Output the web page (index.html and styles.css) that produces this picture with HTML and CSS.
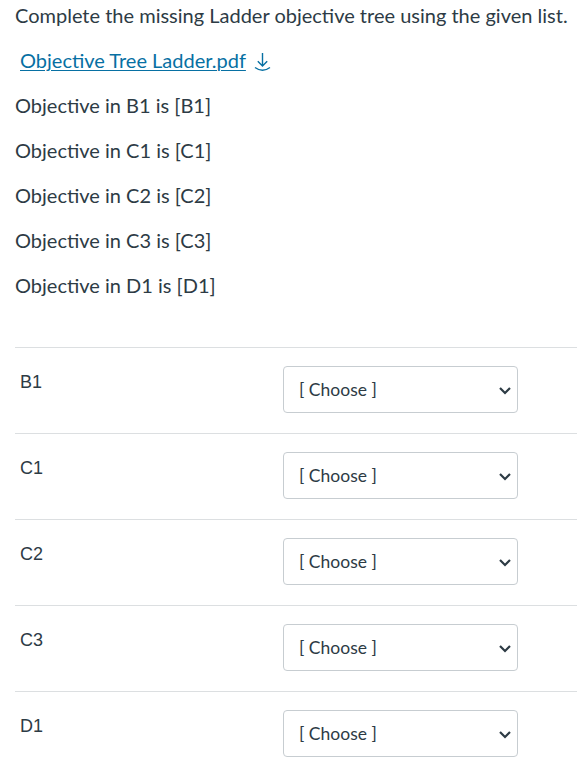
FILE: index.html
```html
<!DOCTYPE html>
<html>
<head>
<meta charset="utf-8">
<link rel="stylesheet" href="styles.css">
</head>
<body>
<div class="page">
  <p class="txt">Complete the missing Ladder objective tree using the given list.</p>
  <p class="txt link-line"><a class="file-link" href="#">Objective Tree Ladder.pdf</a><svg class="dl" width="17" height="21" viewBox="0 0 17 21"><path d="M8.5 2 V15 M3.8 10.3 L8.5 15 L13.2 10.3" fill="none" stroke="#0770a3" stroke-width="1.4"/><path d="M1 16.5 Q8.5 22 16 16.5" fill="none" stroke="#0770a3" stroke-width="1.4"/></svg></p>
  <p class="txt">Objective in B1 is [B1]</p>
  <p class="txt">Objective in C1 is [C1]</p>
  <p class="txt">Objective in C2 is [C2]</p>
  <p class="txt">Objective in C3 is [C3]</p>
  <p class="txt">Objective in D1 is [D1]</p>

  <div class="rows">
    <div class="row"><div class="label">B1</div><div class="sel"><span>[ Choose ]</span><svg class="chev" width="14" height="9" viewBox="0 0 14 9"><path d="M2 2 L7 7 L12 2" fill="none" stroke="#2d3b45" stroke-width="2.2"/></svg></div></div>
    <div class="row"><div class="label">C1</div><div class="sel"><span>[ Choose ]</span><svg class="chev" width="14" height="9" viewBox="0 0 14 9"><path d="M2 2 L7 7 L12 2" fill="none" stroke="#2d3b45" stroke-width="2.2"/></svg></div></div>
    <div class="row"><div class="label">C2</div><div class="sel"><span>[ Choose ]</span><svg class="chev" width="14" height="9" viewBox="0 0 14 9"><path d="M2 2 L7 7 L12 2" fill="none" stroke="#2d3b45" stroke-width="2.2"/></svg></div></div>
    <div class="row"><div class="label">C3</div><div class="sel"><span>[ Choose ]</span><svg class="chev" width="14" height="9" viewBox="0 0 14 9"><path d="M2 2 L7 7 L12 2" fill="none" stroke="#2d3b45" stroke-width="2.2"/></svg></div></div>
    <div class="row"><div class="label">D1</div><div class="sel"><span>[ Choose ]</span><svg class="chev" width="14" height="9" viewBox="0 0 14 9"><path d="M2 2 L7 7 L12 2" fill="none" stroke="#2d3b45" stroke-width="2.2"/></svg></div></div>
  </div>
</div>
</body>
</html>
```
FILE: styles.css
```css
html, body {
  margin: 0;
  padding: 0;
  background: #ffffff;
}
body {
  font-family: Lato, "Noto Sans", sans-serif;
  color: #2d3b45;
}
.page {
  padding: 3px 0 0 15px;
}
.txt {
  margin: 0 0 21px 0;
  font-size: 20px;
  line-height: 24px;
  height: 24px;
}
.link-line {
  padding-left: 5px;
  display: flex;
  align-items: center;
}
.file-link {
  color: #0770a3;
  text-decoration: underline;
  text-underline-offset: 2px;
  text-decoration-thickness: 1px;
}
.dl {
  margin-left: 8px;
  margin-top: 2px;
}
.rows {
  margin-top: 50px;
}
.row {
  border-top: 1px solid #dcdfe1;
  padding: 18px 0 0 5px;
  display: flex;
  box-sizing: border-box;
  height: 86px;
}
.label {
  font-family: "Liberation Sans", Arial, sans-serif;
  font-size: 18px;
  width: 263px;
  padding-top: 7px;
  line-height: 18px;
}
.sel {
  width: 235px;
  height: 47px;
  box-sizing: border-box;
  border: 1px solid #c7cdd1;
  border-radius: 4px;
  display: flex;
  align-items: center;
  justify-content: space-between;
  padding: 0 5px 0 15px;
  font-size: 17.5px;
}
.chev {
  margin-top: 1px;
}
```
